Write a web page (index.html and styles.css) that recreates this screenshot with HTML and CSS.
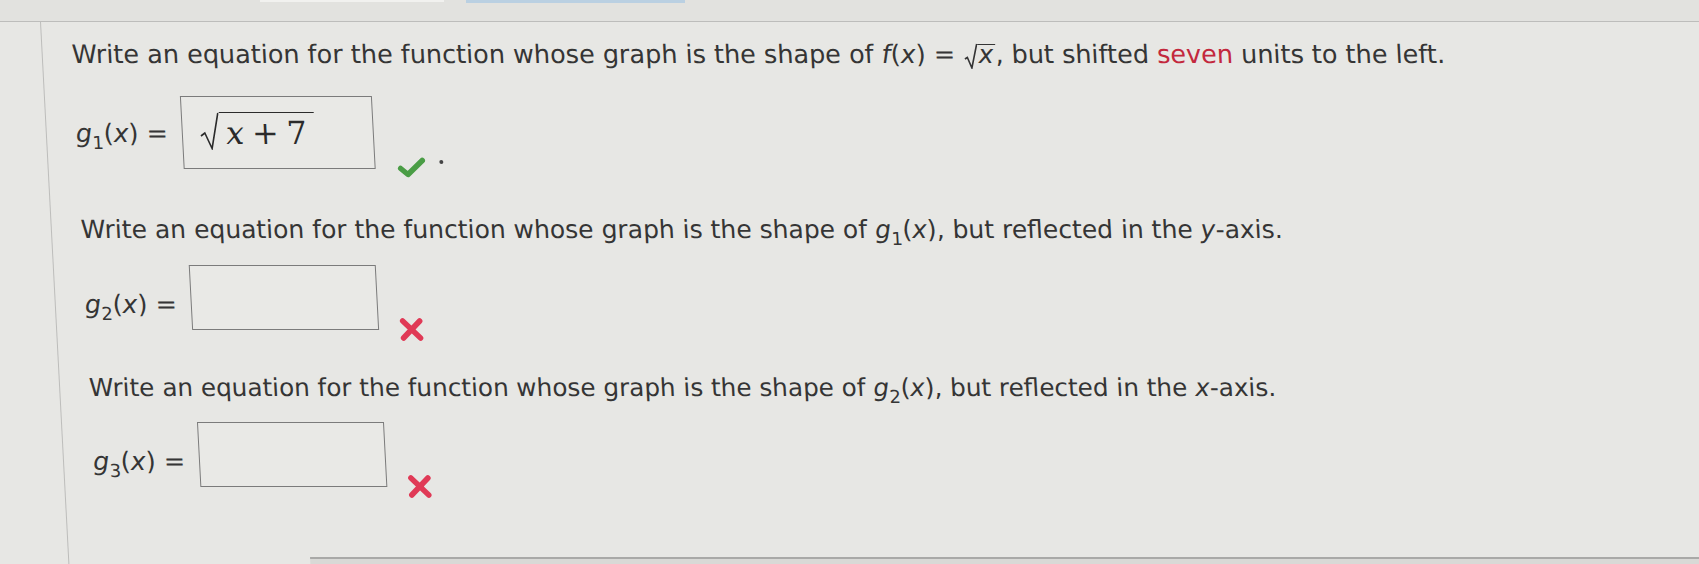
FILE: index.html
```html
<!DOCTYPE html>
<html lang="en">
<head>
<meta charset="utf-8">
<title>Transformations</title>
<link rel="stylesheet" href="styles.css">
</head>
<body>
<div class="topbar"><span class="tb-gap"></span><span class="tb-light"></span><span class="tb-blue"></span></div>
<div class="panel">
  <div class="content">
    <p class="q">Write an equation for the function whose graph is the shape of <i>f</i>(<i>x</i>) = <span class="rad"><svg class="rad-s" viewBox="0 0 14 26" width="14" height="26"><path d="M1 16 L3.5 14.5 L7.5 25 L13.5 1"/></svg><span class="rad-b"><i>x</i></span></span>, but shifted <span class="red">seven</span> units to the left.</p>

    <div class="ans ans1">
      <span class="lbl"><i>g</i><sub>1</sub>(<i>x</i>) =</span>
      <div class="box box1">
        <span class="mj"><svg class="mj-rad" viewBox="0 0 20 38" width="20" height="38"><path d="M1 24 L5 21 L11.5 36.5 L19 1"/></svg><span class="mj-body"><i>x</i><span class="op">+</span>7</span></span>
      </div>
      <svg class="mark check" viewBox="0 0 30 22" width="30" height="22"><path d="M4 12.5 L11 18.5 L26 4.5"/></svg>
      <span class="dot"></span>
    </div>

    <p class="q q2">Write an equation for the function whose graph is the shape of <i>g</i><sub>1</sub>(<i>x</i>), but reflected in the <i>y</i>-axis.</p>

    <div class="ans ans2">
      <span class="lbl lbl-low"><i>g</i><sub>2</sub>(<i>x</i>) =</span>
      <div class="box box2"></div>
      <svg class="mark cross" viewBox="0 0 27 25" width="27" height="25"><path d="M5 4 L22 21 M22 4 L5 21"/></svg>
    </div>

    <p class="q q3">Write an equation for the function whose graph is the shape of <i>g</i><sub>2</sub>(<i>x</i>), but reflected in the <i>x</i>-axis.</p>

    <div class="ans ans3">
      <span class="lbl lbl-low"><i>g</i><sub>3</sub>(<i>x</i>) =</span>
      <div class="box box3"></div>
      <svg class="mark cross" viewBox="0 0 27 25" width="27" height="25"><path d="M5 4 L22 21 M22 4 L5 21"/></svg>
    </div>
  </div>
  <div class="bottombar"></div>
</div>
</body>
</html>
```
FILE: styles.css
```css
html, body {
  margin: 0;
  padding: 0;
}
body {
  background: #e7e7e4;
  font-family: "DejaVu Sans", Verdana, sans-serif;
  color: #353535;
  height: 564px;
  overflow: hidden;
}
.topbar {
  height: 22px;
  box-sizing: border-box;
  border-bottom: 1px solid #bdbdbb;
  background: #e2e2df;
  display: flex;
  align-items: flex-start;
}
.tb-gap { width: 260px; }
.tb-light { width: 184px; height: 2px; background: #f1f1ef; }
.tb-blue { margin-left: 22px; width: 219px; height: 3px; background: #bad0e2; }

.panel {
  margin-left: 40px;
  border-left: 1px solid #bdbdbb;
  height: 542px;
  box-sizing: border-box;
  display: flex;
  flex-direction: column;
  transform: skewX(3deg);
  transform-origin: 0 0;
}
.content {
  padding: 17px 0 0 29px;
}
.q {
  margin: 0;
  font-size: 25.5px;
  line-height: 30px;
  white-space: nowrap;
}
.q2 { margin-top: 46px; font-size: 25px; }
.q3 { margin-top: 43px; font-size: 24.7px; }
.red { color: #c3283d; }
sub {
  font-size: 18px;
  line-height: 0;
  vertical-align: -7px;
}
.rad { white-space: nowrap; }
.rad-s {
  vertical-align: -6px;
  fill: none;
  stroke: #353535;
  stroke-width: 1.6;
}
.rad-b {
  display: inline-block;
  border-top: 1.6px solid #353535;
  line-height: 18px;
  padding: 0 2px 0 1px;
}

.ans {
  display: flex;
  align-items: flex-end;
}
.ans1 { margin-top: 27px; }
.ans2 { margin-top: 20px; }
.ans3 { margin-top: 19px; }
.lbl {
  width: 106px;
  font-size: 25.5px;
  line-height: 30px;
  align-self: center;
  white-space: nowrap;
}
.lbl-low { padding-top: 12px; }

.box {
  border: 1.5px solid #7b7b7b;
  box-sizing: border-box;
  background: #e9e9e6;
}
.box1 { width: 192px; height: 73px; padding: 15px 0 0 17px; }
.box2 { width: 187px; height: 65px; }
.box3 { width: 187px; height: 65px; }

.mj {
  display: inline-flex;
  align-items: flex-start;
  font-family: "DejaVu Serif", "Liberation Serif", serif;
  font-size: 32px;
  color: #2b2b2b;
}
.mj-rad {
  fill: none;
  stroke: #2b2b2b;
  stroke-width: 1.6;
}
.mj-body {
  border-top: 1.6px solid #2b2b2b;
  padding: 4px 8px 0 6px;
  line-height: 1;
}
.op { margin: 0 8px; font-style: normal; }

.mark {
  fill: none;
  stroke-linecap: round;
  stroke-linejoin: round;
}
.check {
  margin-left: 21px;
  margin-bottom: -9px;
  stroke: #4a9d45;
  stroke-width: 5.5;
}
.cross {
  margin-left: 19px;
  margin-bottom: -12px;
  stroke: #e03a56;
  stroke-width: 5.5;
}
.dot {
  width: 4px;
  height: 4px;
  border-radius: 50%;
  background: #444;
  margin-left: 13px;
  margin-bottom: 5px;
}
.bottombar {
  margin-top: auto;
  margin-left: 241px;
  height: 5px;
  border-top: 2px solid #a9a9a7;
  background: #d9d9d6;
}
```
